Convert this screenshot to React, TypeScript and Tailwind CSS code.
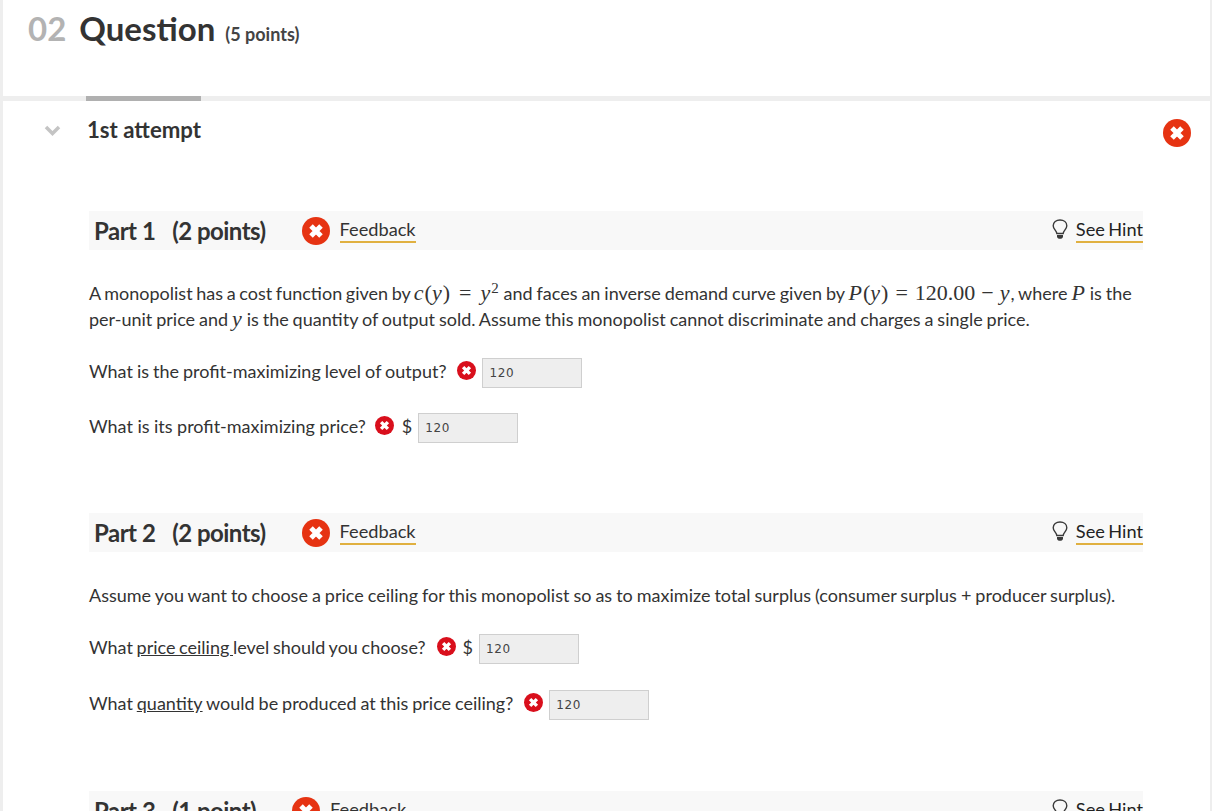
import React from "react";

const lato = "font-['Lato',sans-serif]";

function XCircle({ size, color }: { size: number; color: string }) {
  return (
    <svg width={size} height={size} viewBox="0 0 28 28" className="shrink-0 block">
      <circle cx="14" cy="14" r="14" fill={color} />
      <path d="M9 9 L19 19 M19 9 L9 19" stroke="#fff" strokeWidth="5" strokeLinecap="butt" />
    </svg>
  );
}

function Bulb() {
  return (
    <svg width="16" height="21" viewBox="0 0 16 21" className="block shrink-0" fill="none">
      <path d="M4.8 14.5 C4.4 11.5 1.2 10 1.2 6.8 C1.2 3.2 4.2 1 8 1 C11.8 1 14.8 3.2 14.8 6.8 C14.8 10 11.6 11.5 11.2 14.5 Z" stroke="#3a3a3a" strokeWidth="1.4" />
      <path d="M5 16 H11 V17.5 C11 19 9.5 19.8 8 19.8 C6.5 19.8 5 19 5 17.5 Z" fill="#3a3a3a" />
    </svg>
  );
}

function Inp() {
  return (
    <span className="flex items-center w-[100px] h-[30px] border border-[#cfcfcf] bg-[#eeeeee] pl-[6px] font-['DejaVu_Sans',sans-serif] text-[12px] tracking-[0.6px] text-[#444]">
      120
    </span>
  );
}

function PartHeader({ title, points, iconGap = "ml-[36px]" }: { title: string; points: string; iconGap?: string }) {
  return (
    <div className="flex items-center w-[1054px] h-[39px] bg-[#f8f8f8] pl-[5px] text-[#333]">
      <span className="font-bold text-[24px] tracking-[-0.5px]">{title}</span>
      <span className="font-bold text-[24px] tracking-[-0.55px] ml-[17px]">{points}</span>
      <span className={iconGap}><XCircle size={28} color="#e63312" /></span>
      <span className="ml-[10px] mb-[2px] text-[18.2px] leading-[24px] border-b-2 border-[#e0b040] text-[#333]">Feedback</span>
      <span className="ml-auto mb-[2px]"><Bulb /></span>
      <span className="ml-[8px] mb-[2px] text-[18.2px] [word-spacing:-1.2px] leading-[24px] border-b-2 border-[#e0b040] text-[#222]">See Hint</span>
    </div>
  );
}

const M = ({ children, c = "" }: { children: React.ReactNode; c?: string }) => (
  <span className={`font-['Liberation_Serif',serif] italic text-[22px] leading-none tracking-[1px] ${c}`}>{children}</span>
);
const R = ({ children, c = "" }: { children: React.ReactNode; c?: string }) => (
  <span className={`font-['Liberation_Serif',serif] text-[22px] leading-none ${c}`}>{children}</span>
);

function Question({ children, className = "" }: { children: React.ReactNode; className?: string }) {
  return <div className={`flex items-start h-[30px] text-[18px] leading-[26px] text-[#333] ${className}`}>{children}</div>;
}

const Err = ({ cls }: { cls: string }) => (
  <span className={`mt-[3px] ${cls}`}><XCircle size={19} color="#d90f1c" /></span>
);

export default function App() {
  return (
    <div className={`${lato} h-[811px] w-[1212px] overflow-hidden bg-white`}>
      <div className="h-[811px] border-l-[3px] border-r-[2px] border-[#eeeeee] bg-white">
        <header className="h-[96px] flex items-start pl-[25px] pt-[4px]">
          <span className="font-bold text-[33px] leading-[48px] text-[#b3b3b3]">02</span>
          <span className="font-bold text-[33px] leading-[48px] text-[#333] ml-[13px]">Question</span>
          <span className="font-bold text-[18px] text-[#444] ml-[10px] mt-[17px] leading-[26px]">(5 points)</span>
        </header>
        <div className="h-[5px] bg-[#eeeeee] pl-[83px]">
          <div className="w-[115px] h-[5px] bg-[#b0b0b0]" />
        </div>
        <div className="flex items-start h-[110px] pl-[41px] pr-[19px]">
          <svg width="17" height="12" viewBox="0 0 17 12" className="mt-[24px]" fill="none">
            <path d="M2 2 L8.5 8.5 L15 2" stroke="#c4c4c4" strokeWidth="3.5" />
          </svg>
          <span className="ml-[26px] mt-[14px] text-[22.2px] font-bold leading-[30px] text-[#333]">1st attempt</span>
          <span className="ml-auto mt-[18px]"><XCircle size={28} color="#e63312" /></span>
        </div>
        <main className="pl-[86px]">
          <PartHeader title="Part 1" points="(2 points)" />
          <div className="mt-[30px] w-[1054px] h-[52px] text-[18px] leading-[26px] [word-spacing:-0.7px] text-[#333]">
            <span className="[word-spacing:-0.95px]">A monopolist has a cost function given by</span> <M c="-ml-[1px]">c</M><R>(</R><M>y</M><R>)</R><R c="mx-[9px]">=</R><M>y</M><sup className="font-['Liberation_Serif',serif] text-[15px] leading-none mr-[1px]">2</sup> and faces an inverse demand curve given by <M>P</M><R>(</R><M>y</M><R>)</R><R c="mx-[7px]">=</R><R c="text-[21px]">120.00</R><R c="mx-[6px]">−</R><M>y</M>, where <M>P</M> is the per-unit price and <M>y</M> is the quantity of output sold. Assume this monopolist cannot discriminate and charges a single price.
          </div>
          <Question className="mt-[26px] [word-spacing:-0.6px]">What is the profit-maximizing level of output?<Err cls="ml-[11px]" /><span className="ml-[6px]"><Inp /></span></Question>
          <Question className="mt-[25px] [word-spacing:-0.1px]">What is its profit-maximizing price?<Err cls="ml-[9px]" /><span className="ml-[8px]">$</span><span className="ml-[6px]"><Inp /></span></Question>
          <div className="mt-[70px]"><PartHeader title="Part 2" points="(2 points)" /></div>
          <div className="mt-[30px] text-[18px] leading-[26px] [word-spacing:-0.6px] text-[#333]">Assume you want to choose a price ceiling for this monopolist so as to maximize total surplus (consumer surplus + producer surplus).</div>
          <Question className="mt-[26px] [word-spacing:-0.95px]">What&nbsp;<span className="underline">price ceiling&nbsp;</span>level should you choose?<Err cls="ml-[11px]" /><span className="ml-[7px]">$</span><span className="ml-[6px]"><Inp /></span></Question>
          <Question className="mt-[26px] [word-spacing:-0.72px]">What&nbsp;<span className="underline">quantity</span>&nbsp;would be produced at this price ceiling?<Err cls="ml-[11px]" /><span className="ml-[6px]"><Inp /></span></Question>
          <div className="mt-[71px]"><PartHeader title="Part 3" points="(1 point)" iconGap="ml-[36px]" /></div>
        </main>
      </div>
    </div>
  );
}
